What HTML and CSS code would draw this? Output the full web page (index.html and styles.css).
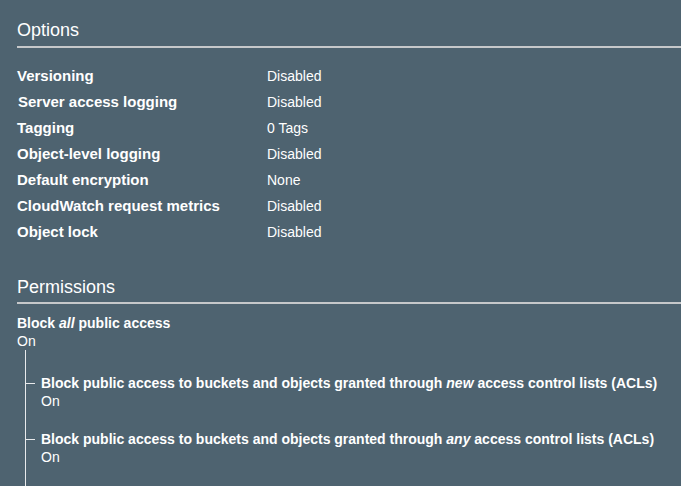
FILE: index.html
```html
<!DOCTYPE html>
<html>
<head>
<meta charset="utf-8">
<link rel="stylesheet" href="styles.css">
</head>
<body>
<main class="page">
  <section class="section">
    <h2 class="section-title">Options</h2>
    <dl class="props">
      <dt class="prop-label">Versioning</dt><dd class="prop-value">Disabled</dd>
      <dt class="prop-label shifted">Server access logging</dt><dd class="prop-value">Disabled</dd>
      <dt class="prop-label">Tagging</dt><dd class="prop-value">0 Tags</dd>
      <dt class="prop-label">Object-level logging</dt><dd class="prop-value">Disabled</dd>
      <dt class="prop-label">Default encryption</dt><dd class="prop-value">None</dd>
      <dt class="prop-label">CloudWatch request metrics</dt><dd class="prop-value">Disabled</dd>
      <dt class="prop-label">Object lock</dt><dd class="prop-value">Disabled</dd>
    </dl>
  </section>
  <section class="section perms">
    <h2 class="section-title">Permissions</h2>
    <div class="setting">
      <div class="setting-name">Block <em>all</em> public access</div>
      <div class="setting-value">On</div>
    </div>
    <ul class="tree">
      <li class="tree-item">
        <span class="tick"></span>
        <div class="setting">
          <div class="setting-name">Block public access to buckets and objects granted through <em>new</em> access control lists (ACLs)</div>
          <div class="setting-value">On</div>
        </div>
      </li>
      <li class="tree-item">
        <span class="tick"></span>
        <div class="setting">
          <div class="setting-name">Block public access to buckets and objects granted through <em>any</em> access control lists (ACLs)</div>
          <div class="setting-value">On</div>
        </div>
      </li>
    </ul>
  </section>
</main>
</body>
</html>
```

FILE: styles.css
```css
html, body {
  margin: 0;
  padding: 0;
  background: #4e6370;
  height: 100%;
  overflow: hidden;
}
body {
  font-family: "Liberation Sans", Arial, sans-serif;
  color: #ffffff;
}
.page {
  padding: 19px 0 0 17px;
}
.section-title {
  margin: 0;
  font-size: 18px;
  font-weight: normal;
  line-height: 22px;
  padding-bottom: 5px;
  border-bottom: 2px solid #c6c8ca;
}
.props {
  margin: 15px 0 0 0;
  display: grid;
  grid-template-columns: 250px auto;
}
.prop-label {
  font-weight: bold;
  font-size: 15px;
  line-height: 26px;
}
.prop-label.shifted {
  padding-left: 1px;
}
.prop-value {
  margin: 0;
  font-size: 14px;
  line-height: 26px;
}
.perms {
  margin-top: 31px;
}
.perms .section-title {
  padding-bottom: 4px;
}
.perms > .setting {
  margin-top: 10px;
}
.setting-name {
  font-weight: bold;
  font-size: 14px;
  line-height: 18px;
}
.setting-name em {
  font-style: italic;
}
.setting-value {
  font-size: 14px;
  line-height: 18px;
}
.tree {
  list-style: none;
  margin: 0 0 0 8px;
  padding: 24px 0 40px 0;
  border-left: 1px solid #e8eaec;
  display: flex;
  flex-direction: column;
  gap: 20px;
}
.tree-item {
  display: flex;
  align-items: flex-start;
}
.tick {
  flex: none;
  width: 9px;
  height: 1px;
  margin-top: 9px;
  margin-right: 6px;
  background: #e8eaec;
}
```
